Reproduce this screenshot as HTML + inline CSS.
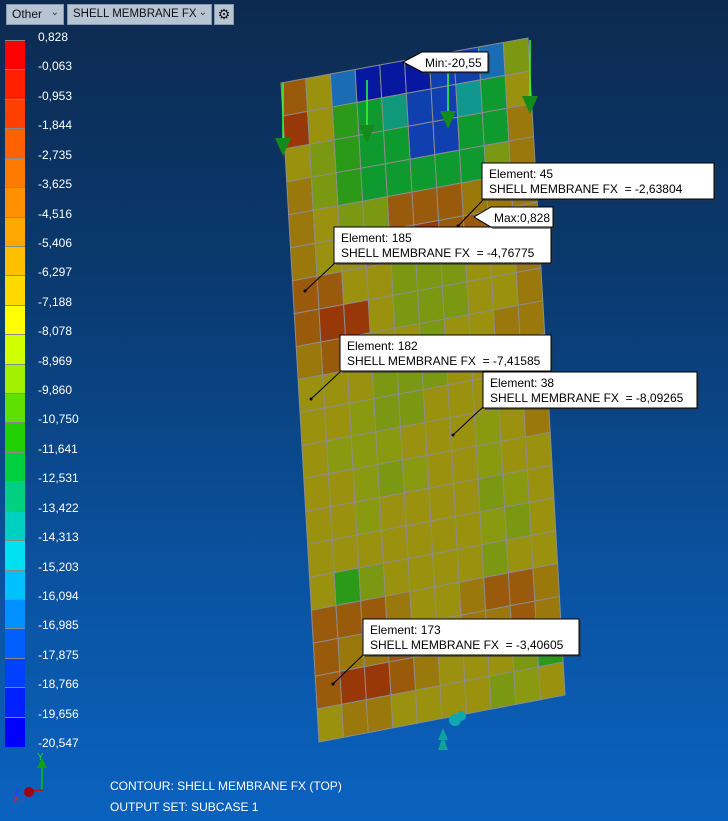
<!DOCTYPE html>
<html><head><meta charset="utf-8">
<style>
html,body{margin:0;padding:0;}
body{width:728px;height:821px;overflow:hidden;position:relative;font-family:"Liberation Sans",sans-serif;
background:linear-gradient(180deg,#0c2a50 0%,#0a3a70 35%,#0a52a0 70%,#0a62bf 100%);}
.dd{position:absolute;top:4px;height:21px;background:#b7c4d4;border:1px solid #8a98aa;box-sizing:border-box;font-size:12px;color:#111;line-height:19px;padding-left:5px;white-space:nowrap;overflow:hidden}
.dd span{position:absolute;right:4px;top:-2px;font-size:10px;color:#333;background:#b7c4d4;padding-left:2px}
.lbl{position:absolute;left:38px;color:#fff;font-size:12px;width:50px;text-align:left}
.bt{position:absolute;left:110px;color:#fff;font-size:12px}
</style></head><body>
<div class="dd" style="left:6px;width:58px">Other<span>&#8964;</span></div>
<div class="dd" style="left:67px;width:145px;font-size:11.5px">SHELL MEMBRANE FX<span>&#8964;</span></div>
<div class="dd" style="left:214px;width:20px;padding:0;text-align:center;font-size:14px;line-height:19px">&#9881;</div>
<div id="legend"></div>
<svg id="s" width="728" height="821" style="position:absolute;left:0;top:0"></svg>
<div class="bt" style="top:779px">CONTOUR: SHELL MEMBRANE FX (TOP)</div>
<div class="bt" style="top:800px">OUTPUT SET: SUBCASE 1</div>
<script>
var lc=["#ff0000","#ff2000","#ff4000","#ff6000","#ff7a00","#ff9000","#ffa800","#ffc000","#ffd800","#ffff00","#d0ff00","#a0f000","#60e000","#20d000","#00d040","#00d080","#00d0c0","#00e0f0","#00c0ff","#0090ff","#0060ff","#0040ff","#0020ff","#0000ff"];
var labs=["0,828","-0,063","-0,953","-1,844","-2,735","-3,625","-4,516","-5,406","-6,297","-7,188","-8,078","-8,969","-9,860","-10,750","-11,641","-12,531","-13,422","-14,313","-15,203","-16,094","-16,985","-17,875","-18,766","-19,656","-20,547"];
var h="",bh=29.42;
for(var i=0;i<24;i++){h+='<div style="position:absolute;left:5px;width:20px;top:'+(40+i*bh)+'px;height:'+(bh+0.5)+'px;background:'+lc[i]+';border-top:1px solid #8a8a8a;box-sizing:border-box"></div>';}
for(var i=0;i<25;i++){h+='<div class="lbl" style="top:'+(30+i*bh)+'px">'+labs[i]+'</div>';}
document.getElementById('legend').innerHTML=h;
var P={O:"#9a5a0c",R:"#983808",Y:"#9a920e",L:"#7a9812",G:"#2a9a18",g:"#0e9a2e",T:"#10987a",C:"#109890",B:"#1040b0",D:"#0618a0",S:"#1a6cb4",A:"#9a780c",M:"#8a9a10"};
var rows=["OYSDDDBBSL","RYGgTBBCgY","YLGggBBggA","ALGgggggLA","AYLLOOOAAA","AYYAOROOAA","OOYYLLLYYA","ORRYLLLYYA","AOYYYLYYAA","YYYLLLYYYA","YYMLLYYYAY","YMMMYYYMYA","YYMLMYYMYY","YYMYYYYLMY","YYYYYYYMLY","YGLYYYYLYY","OOOAYYAOOA","OAAOYYAAOA","ORROAYYYLG","YAAYYYYLMY"];
var TL=[281,83],TR=[528,38],BR=[565,695],BL=[319,742];
function pt(u,v){var x1=TL[0]+(TR[0]-TL[0])*u,y1=TL[1]+(TR[1]-TL[1])*u,x2=BL[0]+(BR[0]-BL[0])*u,y2=BL[1]+(BR[1]-BL[1])*u;return [x1+(x2-x1)*v,y1+(y2-y1)*v];}
var s="";
for(var r=0;r<20;r++)for(var c=0;c<10;c++){
var a=pt(c/10,r/20),b=pt((c+1)/10,r/20),d=pt((c+1)/10,(r+1)/20),e=pt(c/10,(r+1)/20);
s+='<polygon points="'+a+' '+b+' '+d+' '+e+'" fill="'+P[rows[r][c]]+'" stroke="#8c8c8c" stroke-width="1"/>';}
[[283,83,283,150],[367,80,367,137],[448,70,448,123],[530,40,530,108]].forEach(function(q){
s+='<line x1="'+q[0]+'" y1="'+q[1]+'" x2="'+q[2]+'" y2="'+q[3]+'" stroke="#30ff30" stroke-width="1.5"/>';
s+='<polygon points="'+(q[2]-8)+','+(q[3]-12)+' '+(q[2]+8)+','+(q[3]-12)+' '+q[2]+','+(q[3]+6)+'" fill="#148a1a"/>';});
s+='<polygon points="438,740 448,740 443,728" fill="#10a0a0"/><polygon points="438,750 448,750 443,736" fill="#10a0a0"/><circle cx="455" cy="720" r="6" fill="#10a8b0"/><circle cx="461" cy="716" r="5" fill="#10a8b0"/>';
function box(x,y,w,hh,t1,t2){s+='<rect x="'+(x+2)+'" y="'+(y+2)+'" width="'+w+'" height="'+hh+'" fill="#333" opacity="0.6"/><rect x="'+x+'" y="'+y+'" width="'+w+'" height="'+hh+'" fill="#fff" stroke="#000"/>';
s+='<text x="'+(x+7)+'" y="'+(y+15)+'" font-size="12" fill="#000">'+t1+'</text><text x="'+(x+7)+'" y="'+(y+30)+'" font-size="12" fill="#000">'+t2+'</text>';}
function ld(x1,y1,x2,y2){s+='<line x1="'+x1+'" y1="'+y1+'" x2="'+x2+'" y2="'+y2+'" stroke="#000" stroke-width="1"/><circle cx="'+x2+'" cy="'+y2+'" r="1.5" fill="#000"/>';}
ld(484,199,458,226);ld(335,263,305,291);ld(341,371,311,399);ld(483,407,453,435);ld(363,655,333,684);
box(482,163,232,36,"Element: 45","SHELL MEMBRANE FX&#160; = -2,63804");
box(334,227,217,36,"Element: 185","SHELL MEMBRANE FX&#160; = -4,76775");
box(340,335,211,36,"Element: 182","SHELL MEMBRANE FX&#160; = -7,41585");
box(483,372,214,36,"Element: 38","SHELL MEMBRANE FX&#160; = -8,09265");
box(363,619,216,36,"Element: 173","SHELL MEMBRANE FX&#160; = -3,40605");
function flag(px,py,x,y,w,t){s+='<polygon points="'+(px+2)+','+(py+2)+' '+(x+2)+','+(y+2)+' '+(x+w+2)+','+(y+2)+' '+(x+w+2)+','+(y+22)+' '+(x+2)+','+(y+22)+'" fill="#333" opacity="0.6"/><polygon points="'+px+','+py+' '+x+','+y+' '+(x+w)+','+y+' '+(x+w)+','+(y+20)+' '+x+','+(y+20)+'" fill="#fff" stroke="#000"/><text x="'+(x+3)+'" y="'+(y+15)+'" font-size="12" fill="#000">'+t+'</text>';}
flag(403,62,422,52,66,"Min:-20,55");
flag(474,217,491,207,62,"Max:0,828");
s+='<line x1="42" y1="790" x2="42" y2="764" stroke="#10c010" stroke-width="1.5"/><polygon points="37,768 47,768 42,758" fill="#10a010"/><text x="37" y="760" font-size="10" fill="#10e010">Y</text>';
s+='<line x1="30" y1="791" x2="43" y2="790" stroke="#c01010" stroke-width="1.5"/><circle cx="29" cy="792" r="5" fill="#a00010"/><text x="14" y="795" font-size="10" fill="#2040ff">Z</text><text x="13" y="802" font-size="10" fill="#e02020">X</text>';
document.getElementById('s').innerHTML=s;
</script>
</body></html>
